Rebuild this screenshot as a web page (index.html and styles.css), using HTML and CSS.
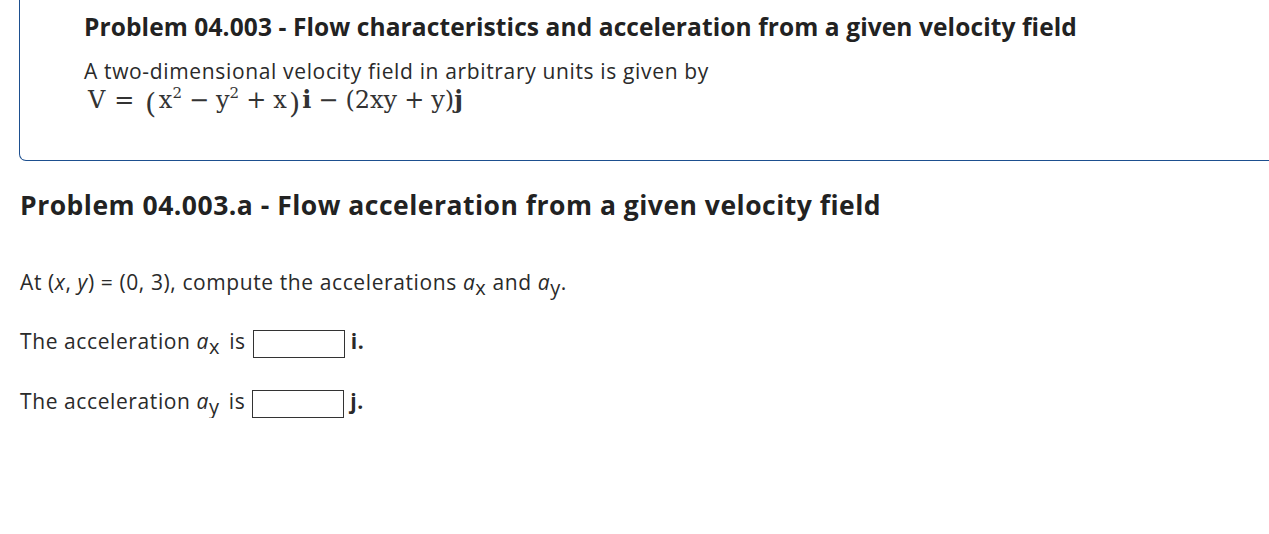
FILE: index.html
```html
<!DOCTYPE html>
<html>
<head>
<meta charset="utf-8">
<link rel="stylesheet" href="styles.css">
</head>
<body>
<div class="intro">
  <h1 class="title">Problem 04.003 - Flow characteristics and acceleration from a given velocity field</h1>
  <p class="lead">A two-dimensional velocity field in arbitrary units is given by</p>
  <div class="math">
    <span>V</span><span class="rel">=</span><span class="big">(</span><span>x<sup>2</sup></span><span class="op">−</span><span>y<sup>2</sup></span><span class="op">+</span><span>x</span><span class="big">)</span><b>i</b><span class="op">−</span><span>(2xy</span><span class="op">+</span><span>y)</span><b>j</b>
  </div>
</div>
<h2 class="part">Problem 04.003.a - Flow acceleration from a given velocity field</h2>
<p class="ask">At (<i>x</i>, <i>y</i>) = (0, 3), compute the accelerations <span class="var">a<sub>x</sub></span> and <span class="var">a<sub>y</sub></span>.</p>
<div class="row"><span class="label">The acceleration <span class="var">a<sub>x</sub></span> is</span><span class="box"></span><b class="unit">i.</b></div>
<div class="row"><span class="label">The acceleration <span class="var">a<sub>y</sub></span> is</span><span class="box"></span><b class="unit">j.</b></div>
</body>
</html>
```
FILE: styles.css
```css
html, body { margin: 0; padding: 0; background: #fff; }
body {
  font-family: "Open Sans", Lato, sans-serif;
  color: #2a2a2a;
  font-variant-ligatures: none;
}
.intro {
  margin-left: 19px;
  margin-right: -20px;
  border: 1px solid #1d4f8f;
  border-top: none;
  border-radius: 0 0 7px 7px;
  padding: 12px 0 0 64px;
  height: 161px;
  box-sizing: border-box;
}
.title {
  margin: 0;
  font-size: 24.5px;
  letter-spacing: 0.1px;
  font-weight: 700;
  line-height: 30px;
  color: #222;
}
.lead {
  margin: 16px 0 0;
  font-size: 21px;
  letter-spacing: 0.65px;
  line-height: 26px;
}
.math {
  font-family: "DejaVu Serif", "Liberation Serif", serif;
  font-size: 24px;
  line-height: 32px;
  margin-left: 4px;
  display: flex;
  align-items: baseline;
  color: #333;
}
.math sup { font-size: 15px; vertical-align: 10px; line-height: 0; }
.math .op { padding: 0 7px; }
.math .rel { padding: 0 9px; }
.math .big {
  display: inline-block;
  margin: 0 3px;
  transform: scale(1.2, 1.2);
  transform-origin: 50% 0;
}
.math b { font-weight: 700; }
.part {
  margin: 27px 0 0 20px;
  font-size: 26.5px;
  letter-spacing: 0.5px;
  font-weight: 700;
  line-height: 34px;
  color: #222;
}
.ask {
  margin: 45px 0 0 20px;
  font-size: 21px;
  letter-spacing: 0.6px;
  line-height: 30px;
}
.var { font-style: italic; }
.var sub { font-style: normal; font-size: 20px; vertical-align: -5px; line-height: 0; }
.row {
  margin: 29px 0 0 20px;
  font-size: 21px;
  letter-spacing: 0.6px;
  line-height: 30px;
  display: flex;
  align-items: flex-start;
}
.row + .row { margin-top: 28px; }
.row .var { margin-right: 3px; }
.box {
  width: 90px;
  height: 26px;
  border: 1px solid #333;
  margin: 4px 6px 0 7px;
}
.unit { font-weight: 700; }
```
